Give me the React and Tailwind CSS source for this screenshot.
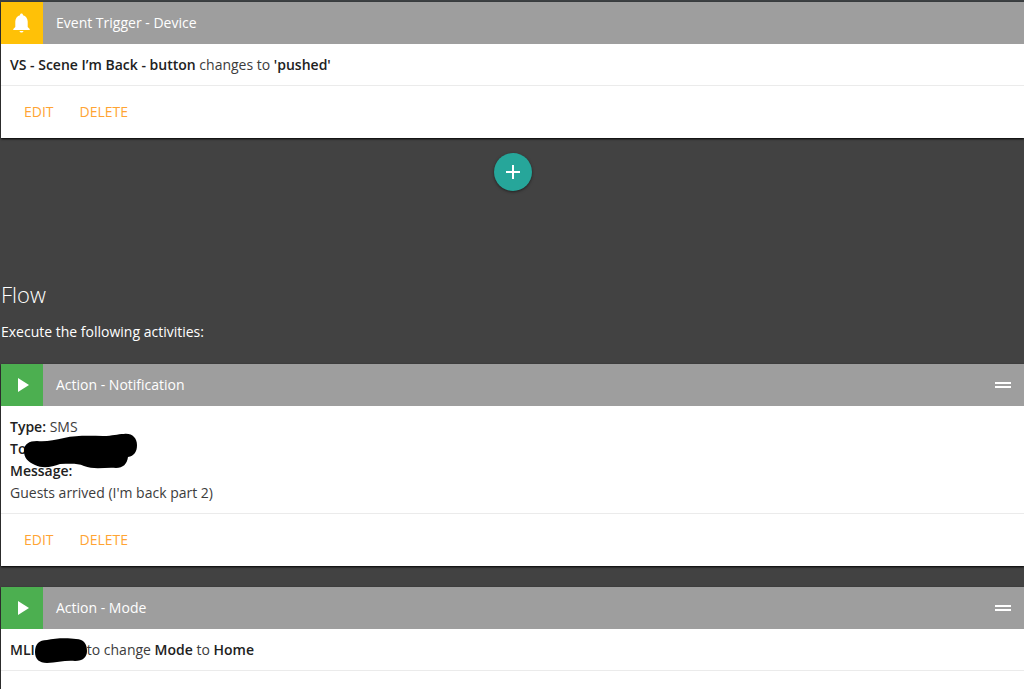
const BellIcon = () => (
    <svg viewBox="0 0 24 24" className="size-6" fill="currentColor" aria-hidden="true">
        <path d="M11.500 21.500c1.100 0 2-.7 2-1.500h-4c0 .8.900 1.500 2 1.500zm6.200-5.500v-5.500c0-3.070-1.900-5.640-4.700-6.320V4c0-.83-.67-1.500-1.500-1.500s-1.500.67-1.500 1.500v.18C7.200 4.860 5.300 7.420 5.300 10.500V16l-2 2v1h16.400v-1l-2-2z" />
    </svg>
);

const PlayIcon = () => (
    <svg viewBox="0 0 24 24" className="size-6" fill="currentColor" aria-hidden="true">
        <path d="M8 5v14l11-7z" />
    </svg>
);

const AddIcon = () => (
    <svg viewBox="0 0 24 24" className="size-6" fill="currentColor" aria-hidden="true">
        <path d="M19 13h-6v6h-2v-6H5v-2h6V5h2v6h6v2z" />
    </svg>
);

const DragIcon = () => (
    <svg viewBox="0 0 16 8" className="w-4 h-2" fill="currentColor" aria-hidden="true">
        <path d="M0 1h16v2H0zM0 5h16v2H0z" />
    </svg>
);

const Card = ({ title, icon, iconClass, draggable, children, className = "" }) => (
    <section className={`bg-white shadow-[0_1px_2px_#000000] ${className}`}>
        <header className="flex items-center h-[42px] bg-[#9e9e9e] text-white">
            <div className={`flex items-center justify-center size-[42px] shrink-0 ${iconClass}`}>
                {icon}
            </div>
            <h3 className="flex-1 px-[13px]">{title}</h3>
            {draggable && (
                <button type="button" aria-label="Move" className="mr-[13px]">
                    <DragIcon />
                </button>
            )}
        </header>
        {children}
    </section>
);

const CardBody = ({ children }) => (
    <div className="px-[9px] pt-2.5 pb-[9px] leading-[22px] text-[#3c3c3c] border-b border-[#ebebeb]">
        {children}
    </div>
);

const CardActions = () => (
    <footer className="flex items-center gap-[26px] h-[52px] px-[23px] text-[#ffa433]">
        <button type="button">EDIT</button>
        <button type="button">DELETE</button>
    </footer>
);

const Strong = ({ children }) => <b className="font-semibold text-[#212121]">{children}</b>;

export default function App() {
    return (
        <main className="flex flex-col min-h-screen border-t-2 border-l border-t-[#3d4143] border-l-[#424242] bg-[#424242] font-['Open_Sans','Noto_Sans',sans-serif] text-sm text-white">
            <Card title="Event Trigger - Device" icon={<BellIcon />} iconClass="bg-[#ffc107]">
                <CardBody>
                    <Strong>VS - Scene I’m Back - button</Strong> changes to <Strong>'pushed'</Strong>
                </CardBody>
                <CardActions />
            </Card>

            <button
                type="button"
                aria-label="Add"
                className="flex items-center justify-center self-center size-[38px] mt-[15px] rounded-full bg-[#26a69a] shadow-[0_1px_3px_#00000080]"
            >
                <AddIcon />
            </button>

            <h2 className="mt-[87px] text-[22px] leading-8 font-light">Flow</h2>
            <p className="mt-[11px] mb-[21px] leading-[22px]">Execute the following activities:</p>

            <Card title="Action - Notification" icon={<PlayIcon />} iconClass="bg-[#4caf50]" draggable>
                <CardBody>
                    <p><Strong>Type:</Strong> SMS</p>
                    <div className="relative">
                        <Strong>To</Strong>
                        {/* redacted number */}
                        <svg
                            viewBox="0 0 114 36"
                            className="absolute left-3.5 top-[-5px] w-[114px] h-9"
                            fill="#000000"
                            aria-hidden="true"
                        >
                            <path d="M0 18C0 11 5 8 13 8C22 9 30 7 40 5C53 2 67 3 79 3C89 3 93 1 100 1C108 0 113 5 113 12C113 19 110 23 104 24C103 31 99 35 92 35C82 34 70 37 60 33C53 30 46 31 36 31C28 34 19 36 11 32C4 29 0 25 0 18Z" />
                        </svg>
                    </div>
                    <p><Strong>Message:</Strong></p>
                    <p>Guests arrived (I'm back part 2)</p>
                </CardBody>
                <CardActions />
            </Card>

            <Card
                title="Action - Mode"
                icon={<PlayIcon />}
                iconClass="bg-[#4caf50]"
                className="mt-[21px] flex-1"
                draggable
            >
                <CardBody>
                    <div className="flex">
                        <Strong>MLI</Strong>
                        {/* redacted name */}
                        <svg
                            viewBox="0 0 52 26"
                            className="-my-0.5 w-[52px] h-[26px]"
                            fill="#000000"
                            aria-hidden="true"
                        >
                            <path d="M0 15C0 7 4 3 12 3C20 1 34 1 41 2C49 2 52 7 52 14C52 20 48 24 40 24C30 23 22 26 12 26C4 26 0 22 0 15Z" />
                        </svg>
                        <p>to change <Strong>Mode</Strong> to <Strong>Home</Strong></p>
                    </div>
                </CardBody>
            </Card>
        </main>
    );
}
